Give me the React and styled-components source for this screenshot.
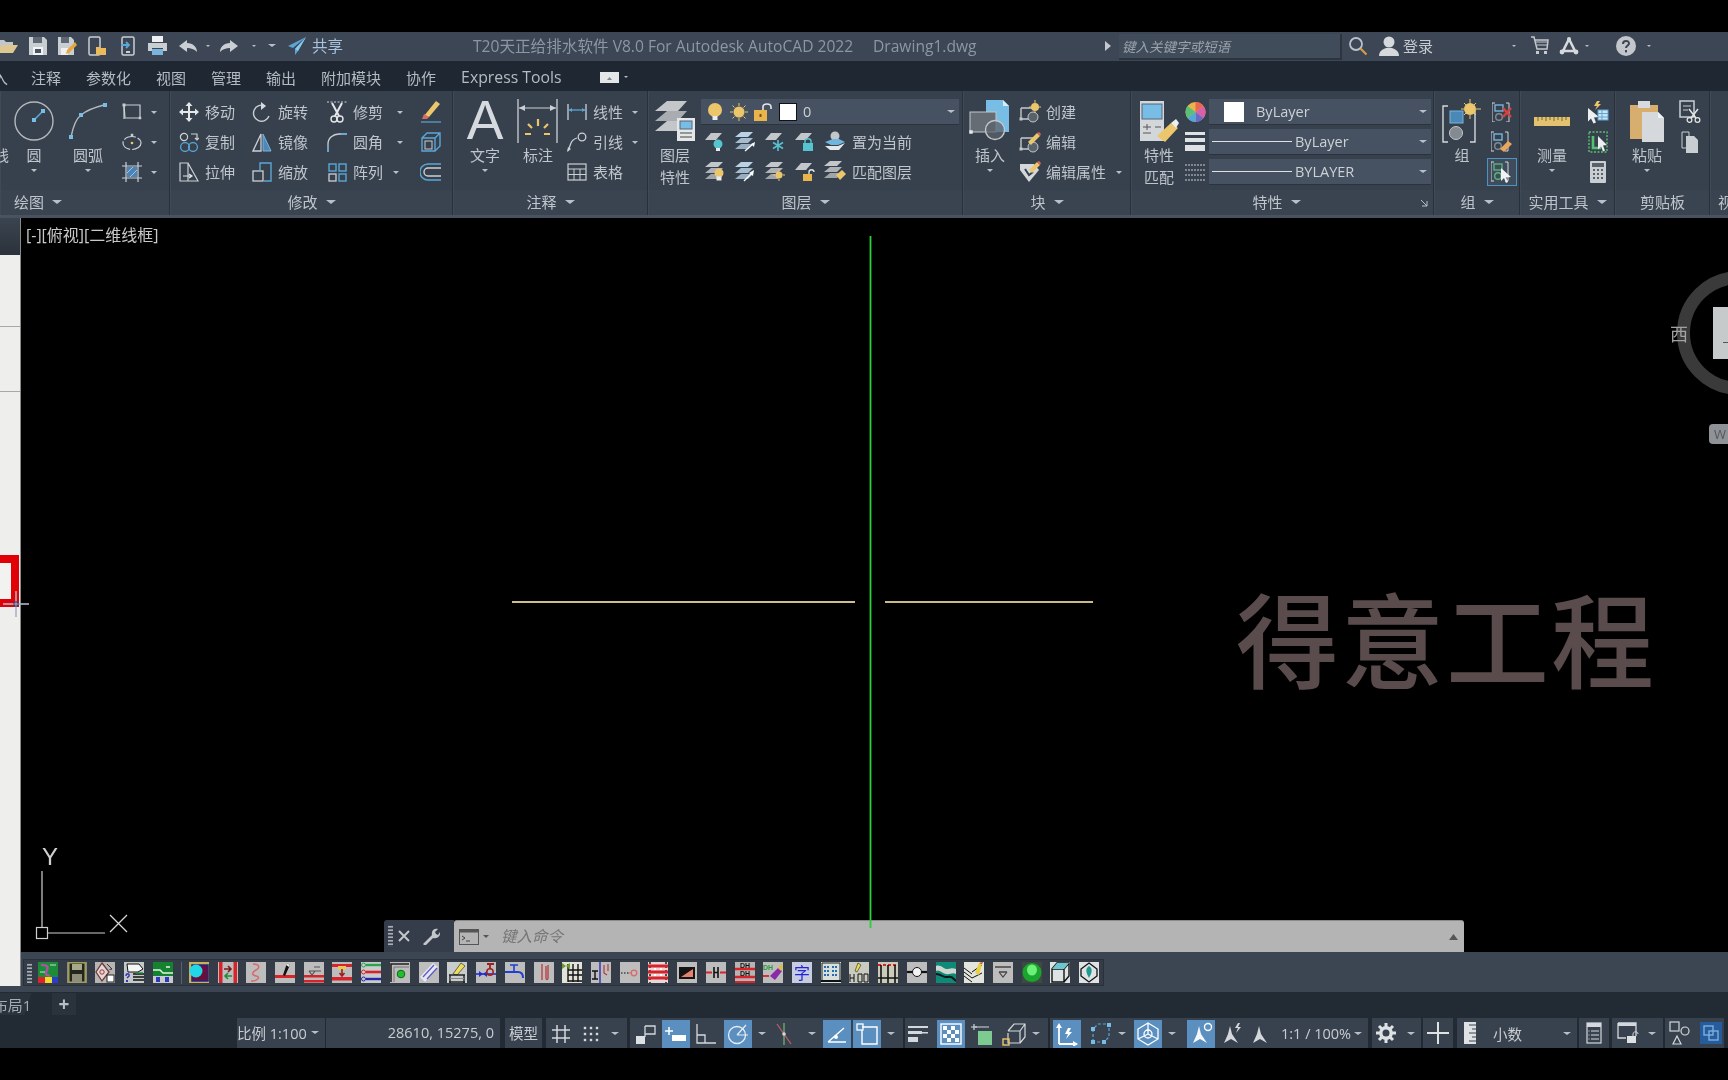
import styled, { createGlobalStyle } from "styled-components";

const FONT = `"Open Sans", "Noto Sans CJK SC", sans-serif`;
const L = "#ccd0d4";
const B = "#5ba6d6";
const Y = "#ecc66a";

const Global = createGlobalStyle`
  html, body { margin: 0; padding: 0; background: #000; }
  * { box-sizing: border-box; }
`;

const Frame = styled.div`
  width: 1728px;
  height: 1080px;
  overflow: hidden;
  background: #000;
  display: flex;
  flex-direction: column;
  font-family: ${FONT};
  filter: blur(0.55px);
`;

const TopGap = styled.div`
  height: 32px;
  flex-shrink: 0;
`;

const TitleBar = styled.div`
  height: 29px;
  flex-shrink: 0;
  background: #3c4654;
  display: flex;
  align-items: center;
  padding-bottom: 2px;
  color: #8d97a4;
  font-size: 15.6px;
  white-space: nowrap;
`;

const Slot = styled.span`
  display: flex;
  align-items: center;
  flex-shrink: 0;
  margin-left: ${p => p.$ml || 0}px;
`;

const ShareText = styled.span`
  margin-left: 6px;
  color: #a9c3dc;
  font-size: 15.5px;
`;

const AppTitle = styled.span`
  margin-left: ${p => p.$ml}px;
  width: ${p => p.$w}px;
  flex-shrink: 0;
`;

const SearchBox = styled.div`
  width: 223px;
  height: 26px;
  margin-left: 8px;
  margin-top: 2px;
  background: #414c5a;
  border-right: 2px solid #2c343f;
  border-bottom: 2px solid #2c343f;
  display: flex;
  align-items: center;
  padding-left: 3px;
  font-size: 13.5px;
  font-style: italic;
  color: #98a2ad;
`;

const LoginText = styled.span`
  margin-left: 3px;
  color: #c6cbd1;
  font-size: 15px;
  width: 92px;
`;

const MenuBar = styled.div`
  height: 30px;
  flex-shrink: 0;
  background: #1f2733;
  display: flex;
  align-items: center;
  gap: 25px;
  padding: 2px 0 0 31px;
  position: relative;
  color: #b4bbc3;
  font-size: 15px;
  white-space: nowrap;
`;

const ClippedTab = styled.span`
  position: absolute;
  left: -7px;
`;

const LatinTab = styled.span`
  font-size: 15.8px;
`;

const Ribbon = styled.div`
  height: 124px;
  flex-shrink: 0;
  background: #37414d;
  display: flex;
  color: #bfc5cc;
  font-size: 15px;
  white-space: nowrap;
`;

const Panel = styled.div`
  width: ${p => p.$w}px;
  flex-shrink: 0;
  display: flex;
  flex-direction: column;
  border-right: 1px solid #283039;
  border-left: 1px solid #404a57;
`;

const PanelBody = styled.div`
  height: 99px;
  padding-top: 6px;
  display: flex;
`;

const PanelFoot = styled.div`
  height: 25px;
  display: flex;
  align-items: center;
  justify-content: ${p => (p.$start ? "flex-start" : "center")};
  gap: 8px;
  padding-right: ${p => p.$pr || 0}px;
  padding-left: ${p => p.$pl || 0}px;
  padding-bottom: 2px;
  position: relative;
  background: #3a4451;
`;

const CornerMark = styled.svg`
  position: absolute;
  right: 5px;
  top: 9px;
`;

const Caret = styled.i`
  display: block;
  flex-shrink: 0;
  width: 0;
  height: 0;
  border-left: ${p => p.$s || 3.5}px solid transparent;
  border-right: ${p => p.$s || 3.5}px solid transparent;
  border-top: ${p => (p.$s || 3.5) * 0.9}px solid ${p => p.$c || "#b9bfc6"};
  margin-left: ${p => p.$ml || 0}px;
  margin-right: ${p => p.$mr || 0}px;
`;

const Large = styled.div`
  width: ${p => p.$w}px;
  margin-left: ${p => p.$ml || 0}px;
  flex-shrink: 0;
  display: flex;
  flex-direction: column;
  align-items: ${p => (p.$end ? "flex-end" : "center")};
`;

const LargeIcon = styled.div`
  height: 47px;
  display: flex;
  align-items: center;
  justify-content: center;
`;

const LargeLabel = styled.div`
  line-height: 22px;
`;

const LargeCaret = styled(Caret)`
  margin-top: 3px;
`;

const BigA = styled.div`
  font-family: "Liberation Sans", sans-serif;
  font-size: 55px;
  line-height: 47px;
  color: #d6dadf;
`;

const Col = styled.div`
  width: ${p => p.$w}px;
  margin-left: ${p => p.$ml || 0}px;
  flex-shrink: 0;
  display: flex;
  flex-direction: column;
`;

const Row = styled.div`
  height: 30px;
  display: flex;
  align-items: center;
  justify-content: ${p => (p.$center ? "center" : "flex-start")};
`;

const ToolSlot = styled.span`
  width: ${p => p.$w}px;
  display: flex;
  justify-content: center;
  flex-shrink: 0;
`;

const ToolText = styled.span`
  margin-left: ${p => p.$ml ?? 6}px;
  padding-bottom: 2px;
`;

const Boxed = styled.div`
  width: 30px;
  height: 28px;
  border: 1.5px solid #4f93c0;
  background: #3f4c5b;
  display: flex;
  align-items: center;
  justify-content: center;
`;

const Combo = styled.div`
  width: ${p => p.$w}px;
  height: 26px;
  background: #465261;
  border-bottom: 1px solid #2b333d;
  display: flex;
  align-items: center;
  padding: 0 ${p => p.$pr || 4}px 0 ${p => p.$pl || 6}px;
  color: #ccd1d6;
  font-size: 14.5px;
`;

const ComboValue = styled.span`
  flex: 1;
  margin-left: ${p => p.$ml || 0}px;
`;

const Swatch = styled.span`
  width: ${p => p.$w}px;
  height: ${p => p.$h}px;
  background: #fff;
  border: ${p => (p.$dark ? "1.5px solid #111" : "none")};
  margin-left: ${p => p.$ml || 0}px;
  flex-shrink: 0;
`;

const LineSample = styled.span`
  width: 80px;
  height: 1.5px;
  background: #dfe2e5;
  flex-shrink: 0;
`;

const RibbonEdge = styled.div`
  height: 3px;
  flex-shrink: 0;
  background: #49535f;
`;

const Main = styled.div`
  height: 774px;
  flex-shrink: 0;
  display: flex;
  background: #3c4652;
`;

const Palette = styled.div`
  width: 21px;
  flex-shrink: 0;
  height: 768px;
  display: flex;
  flex-direction: column;
  border-right: 1.5px solid #8a8a8a;
  background: #eeeeec;
  position: relative;
  z-index: 2;
`;

const PaletteHead = styled.div`
  height: 37px;
  background: linear-gradient(#3a4450, #2b323b);
`;

const PaletteRow = styled.div`
  height: ${p => p.$h}px;
  border-bottom: ${p => (p.$line ? "1px solid #a8a8a8" : "none")};
`;

const RedMark = styled.div`
  width: 19px;
  height: 52px;
  border: 8px solid #e00006;
  border-left: none;
  background: #f2f2f0;
`;

const PickCursor = styled.svg`
  position: absolute;
  left: 3px;
  top: 373px;
`;

const Work = styled.div`
  flex: 1;
  display: flex;
  flex-direction: column;
  min-width: 0;
`;

const Canvas = styled.div`
  height: 734px;
  background: #000;
  position: relative;
  overflow: hidden;
`;

const ViewLabel = styled.div`
  position: absolute;
  left: 5px;
  top: 4px;
  font-size: 16px;
  color: #c9c9c9;
  white-space: nowrap;
`;

const Drawing = styled.svg`
  position: absolute;
  left: 0;
  top: 0;
`;

const Watermark = styled.div`
  position: absolute;
  left: 1215px;
  top: 354px;
  font-family: "Noto Sans CJK SC", sans-serif;
  font-size: 103px;
  font-weight: 500;
  line-height: 130px;
  letter-spacing: 2px;
  color: #5a4c4c;
  white-space: nowrap;
`;

const CompassWest = styled.div`
  position: absolute;
  left: 1649px;
  top: 103px;
  font-size: 18px;
  line-height: 26px;
  color: #a2a2a2;
`;

const CubeFace = styled.div`
  position: absolute;
  left: 1692px;
  top: 89px;
  width: 40px;
  height: 52px;
  background: #c6caca;
  display: flex;
  align-items: flex-end;
  padding: 0 0 16px 10px;
  &::after {
    content: "";
    width: 6px;
    height: 1px;
    background: #555;
  }
`;

const WcsTag = styled.div`
  position: absolute;
  left: 1688px;
  top: 206px;
  width: 44px;
  height: 20px;
  border-radius: 4px;
  background: #8f9296;
  color: #54575b;
  font-size: 13px;
  line-height: 20px;
  padding-left: 5px;
`;

const CommandLine = styled.div`
  position: absolute;
  left: 363px;
  bottom: 0;
  width: 1080px;
  height: 32px;
  display: flex;
`;

const CommandHead = styled.div`
  width: 70px;
  flex-shrink: 0;
  background: #343d49;
  border-radius: 3px 0 0 0;
  display: flex;
  align-items: center;
  gap: 5px;
  padding-left: 4px;
`;

const Grip = styled.span`
  width: 5px;
  height: ${p => p.$h}px;
  flex-shrink: 0;
  background-image: radial-gradient(circle, #a9adb3 1.1px, transparent 1.3px);
  background-size: 2.5px 3.5px;
`;

const CommandInput = styled.div`
  flex: 1;
  background: #b4b4b4;
  border-top: 1px solid #8b8b8b;
  border-radius: 3px 3px 0 0;
  display: flex;
  align-items: center;
  padding: 0 6px 0 5px;
`;

const CommandHint = styled.span`
  flex: 1;
  margin-left: 12px;
  padding-bottom: 3px;
  color: #767676;
  font-style: italic;
  font-size: 15.5px;
`;

const ToolBand = styled.div`
  height: 40px;
  padding: 7px 0 0 2px;
`;

const ToolStrip = styled.div`
  width: 1081px;
  height: 27px;
  background: #333c47;
  border: 1px solid #2a313a;
  display: flex;
  align-items: center;
  padding-left: 3px;
`;

const MiniIcons = styled.div`
  display: flex;
  gap: 8.72px;
  margin-left: ${p => p.$ml}px;
`;

const StripSep = styled.span`
  width: 1px;
  height: 22px;
  background: #59626e;
  margin-left: 8px;
`;

const Lower = styled.div`
  height: 56px;
  flex-shrink: 0;
  background: #222a33;
`;

const LayoutTabs = styled.div`
  height: 26px;
  display: flex;
  align-items: center;
  padding-bottom: 3px;
  color: #a5abb3;
  font-size: 15px;
`;

const LayoutTab = styled.div`
  width: 42px;
  height: 22px;
  margin-left: -14px;
  padding-left: 7px;
  background: #2a323c;
  transform: skewX(-18deg);
  display: flex;
  align-items: center;
  white-space: nowrap;
  & > span { transform: skewX(18deg); }
`;

const AddTab = styled.div`
  width: 24px;
  height: 22px;
  margin-left: 24px;
  background: #2a323c;
  display: flex;
  align-items: center;
  justify-content: center;
  font-size: 19px;
  font-weight: 700;
  color: #b9bec4;
`;

const StatusBar = styled.div`
  height: 30px;
  padding-left: 237px;
  display: flex;
  color: #c8ccd1;
  font-size: 14.5px;
  white-space: nowrap;
`;

const StatusPill = styled.div`
  width: ${p => p.$w}px;
  margin-left: ${p => p.$ml ?? 2}px;
  flex-shrink: 0;
  background: #38424e;
  display: flex;
  align-items: center;
  padding-left: ${p => p.$pl || 0}px;
  padding-bottom: ${p => (p.$text ? 2 : 0)}px;
`;

const StatusValue = styled.span`
  flex: 1;
  text-align: ${p => (p.$right ? "right" : "left")};
  padding-right: ${p => (p.$right ? 6 : 0)}px;
  padding-left: ${p => p.$pl || 0}px;
`;

const StatusBtn = styled.div`
  width: ${p => p.$w || 28}px;
  height: 28px;
  margin-top: 2px;
  margin-left: ${p => p.$ml || 0}px;
  flex-shrink: 0;
  align-self: flex-start;
  background: ${p => (p.$on ? "#5b8fbf" : "transparent")};
  display: flex;
  align-items: center;
  justify-content: center;
`;

const Foot = styled.div`
  flex: 1;
  background: #000;
`;

const Ic = ({ w = 20, h = 20, children }) => (
  <svg width={w} height={h} viewBox={`0 0 ${w} ${h}`} style={{ display: "block", flexShrink: 0 }} fill="none">
    {children}
  </svg>
);

const sq = (x, y, s = 4, c = "#77bde6") => <rect x={x - s / 2} y={y - s / 2} width={s} height={s} fill={c} />;

// quick access
const FolderIcon = () => (
  <Ic w={18} h={18}>
    <path d="M-4 3h8l2 2h7v3H4l-6 8" fill="#c3c7cb" />
    <path d="M-4 16l6-8h16l-5 8z" fill="#dfc792" />
  </Ic>
);
const SaveIcon = () => (
  <Ic>
    <path d="M1 1h15l3 3v15H1z" fill="#c9ced3" />
    <rect x="5" y="1" width="9" height="6" fill="#5f6874" />
    <rect x="5" y="11" width="10" height="8" fill="#f2f3f4" />
    <rect x="7" y="13" width="6" height="4" fill="#4b5460" />
  </Ic>
);
const SaveAsIcon = () => (
  <Ic>
    <path d="M1 1h13l3 3v15H1z" fill="#c9ced3" />
    <rect x="4" y="1" width="8" height="6" fill="#5f6874" />
    <rect x="4" y="12" width="7" height="7" fill="#eef0f1" />
    <path d="M9 18l1-4 8-8 2 3-8 8z" fill="#e9a63f" />
  </Ic>
);
const PhoneFolderIcon = () => (
  <Ic w={18} h={20}>
    <rect x="1" y="1" width="11" height="18" rx="1.5" stroke="#c9ced3" strokeWidth="1.5" />
    <path d="M8 11h4l1 1h5v7H8z" fill="#e9bb5c" />
  </Ic>
);
const PhoneArrowIcon = () => (
  <Ic w={16} h={20}>
    <rect x="2" y="1" width="12" height="18" rx="1.5" stroke="#c9ced3" strokeWidth="1.5" />
    <path d="M1 9h7M6 6l3 3-3 3" stroke={B} strokeWidth="1.8" />
    <rect x="6" y="15" width="4" height="2" fill="#c9ced3" />
  </Ic>
);
const PrintIcon = () => (
  <Ic w={21} h={21}>
    <rect x="5" y="1" width="11" height="6" fill="#eef0f1" />
    <path d="M1 8h19v8h-4v-3H5v3H1z" fill="#c9ced3" />
    <rect x="5" y="14" width="11" height="6" fill="#7ab4dc" />
  </Ic>
);
const UndoIcon = ({ flip }) => (
  <Ic w={20} h={14}>
    <path d={flip ? "M11 1l8 6-8 6V9C7 9 4 10 1 13c0-5 4-9 10-9z" : "M9 1L1 7l8 6V9c4 0 7 1 10 4 0-5-4-9-10-9z"} fill="#c9ced3" />
  </Ic>
);
const SendIcon = () => (
  <Ic w={18} h={18}>
    <path d="M18 0L0 9l5 2zM18 0L7 12v6l3-4z" fill={B} />
    <path d="M18 0L10 14l-3-2z" fill="#8cc8ee" />
  </Ic>
);
const LensIcon = () => (
  <Ic>
    <circle cx="8" cy="8" r="6" stroke="#b9c2cc" strokeWidth="1.8" />
    <path d="M12.5 12.5l6 6" stroke="#d69c45" strokeWidth="2.2" />
  </Ic>
);
const UserIcon = () => (
  <Ic w={22} h={20}>
    <circle cx="11" cy="6" r="5.5" fill="#d5d9dd" />
    <path d="M1 20c0-5 4-7 7-8h6c3 1 7 3 7 8z" fill="#d5d9dd" />
  </Ic>
);
const CartIcon = () => (
  <Ic w={18} h={20}>
    <path d="M0 1h3l3 12h10l1-9H4" stroke="#c5c9ce" strokeWidth="1.5" />
    <path d="M5 6h11M6 9h10" stroke="#c5c9ce" strokeWidth="1" />
    <rect x="5" y="15" width="3" height="3" fill="#c5c9ce" />
    <rect x="13" y="15" width="3" height="3" fill="#c5c9ce" />
  </Ic>
);
const A360Icon = () => (
  <Ic>
    <path d="M10 3L3 17M10 3l7 14M4 15h12" stroke="#d5d9dd" strokeWidth="2.6" />
    <circle cx="10" cy="3" r="2" fill="#d5d9dd" />
    <circle cx="3" cy="16" r="2.4" fill="#d5d9dd" />
    <circle cx="17" cy="16" r="2.4" fill="#d5d9dd" />
  </Ic>
);
const HelpIcon = () => (
  <Ic>
    <circle cx="10" cy="10" r="10" fill="#c3c7cb" />
    <path d="M7 8c0-4 6-4 6-.5 0 2-3 2-3 4.5" stroke="#3c4654" strokeWidth="2" />
    <rect x="9" y="14" width="2" height="2.4" fill="#3c4654" />
  </Ic>
);
const LayoutThumb = () => (
  <Ic w={19} h={11}>
    <rect width="19" height="11" fill="#e4e6e8" />
    <path d="M7 8l2.5-3L12 8z" fill="#7c8590" />
  </Ic>
);

// draw panel
const CircleTool = () => (
  <Ic w={40} h={40}>
    <circle cx="20" cy="20" r="19" stroke="#b4b8bc" strokeWidth="1.4" />
    <path d="M20 19L29 10" stroke={B} strokeWidth="1.6" />
    {sq(20, 19)}
    {sq(29, 10)}
  </Ic>
);
const ArcTool = () => (
  <Ic w={40} h={38}>
    <path d="M3 35C5 25 9 16 13 13 20 7 28 5 36 3" stroke="#b4b8bc" strokeWidth="1.4" />
    {sq(3, 35)}
    {sq(13, 13)}
    {sq(37, 3)}
  </Ic>
);
const RectTool = () => (
  <Ic>
    <path d="M2 3h16v13H3z" stroke={L} strokeWidth="1.2" />
    <path d="M2 3v14" stroke={L} strokeWidth="1.2" />
    {sq(2, 3, 3, "#c8ccd0")}
    {sq(18, 16, 2.5, "#c8ccd0")}
  </Ic>
);
const EllipseTool = () => (
  <Ic>
    <ellipse cx="10" cy="11" rx="9" ry="6.5" stroke={L} strokeDasharray="12 2" strokeWidth="1.2" />
    <circle cx="10" cy="11" r="1.3" fill={Y} />
    {sq(10, 3, 2.5, "#c8ccd0")}
  </Ic>
);
const HatchTool = () => (
  <Ic>
    <path d="M4 0v20M16 0v20M0 4h20M0 16h20" stroke={L} strokeWidth="1.2" />
    <rect x="5" y="5" width="10" height="10" fill="#4e83b5" />
    <path d="M5 11l6-6M8 15l7-7" stroke="#9fc4e3" />
  </Ic>
);

// modify panel
const MoveIcon = () => (
  <Ic>
    <path d="M10 1v18M1 10h18" stroke="#e4e6e8" strokeWidth="2" />
    <path d="M10 0l3.5 4h-7zM10 20l3.5-4h-7zM0 10l4-3.5v7zM20 10l-4-3.5v7z" fill="#e4e6e8" />
  </Ic>
);
const RotateIcon = () => (
  <Ic>
    <path d="M13 4A8 8 0 1 0 17 14" stroke={L} strokeWidth="1.4" />
    <path d="M9 0l5 4-5 4z" fill="#d8dbde" />
  </Ic>
);
const TrimIcon = () => (
  <Ic w={20} h={24}>
    <path d="M0 2h20" stroke={L} strokeDasharray="2 1.5" />
    <path d="M5 3l7 13M15 3L8 16" stroke="#e4e6e8" strokeWidth="2" />
    <circle cx="7" cy="19" r="3" stroke="#e4e6e8" strokeWidth="1.4" />
    <circle cx="13" cy="19" r="3" stroke="#e4e6e8" strokeWidth="1.4" />
  </Ic>
);
const EraseIcon = () => (
  <Ic w={22} h={24}>
    <path d="M16 1l4 3L9 17l-5-1z" fill={Y} />
    <path d="M4 14l5 3-2 2H2z" fill="#d86a63" />
    <path d="M1 22h20" stroke={B} strokeWidth="1.2" />
  </Ic>
);
const CopyIcon = () => (
  <Ic>
    <circle cx="5" cy="5" r="3.6" stroke={L} strokeWidth="1.2" />
    <path d="M12 2h6v6M16 6l2 2 2-2" stroke={L} strokeWidth="1.2" />
    <circle cx="6" cy="15" r="4.4" stroke={B} strokeWidth="1.3" />
    <circle cx="14" cy="15" r="4.4" stroke={B} strokeWidth="1.3" />
  </Ic>
);
const MirrorIcon = () => (
  <Ic>
    <path d="M9 2L1 19h8z" stroke={L} strokeWidth="1.3" />
    <path d="M11 2l8 17h-8z" fill="#4f87b6" stroke="#7ab4dc" />
  </Ic>
);
const FilletIcon = () => (
  <Ic>
    <path d="M1 20V12C1 6 6 2 12 2h8" stroke={L} strokeWidth="1.3" />
    <path d="M1 20v-6M14 2h6" stroke={B} strokeWidth="1.3" />
  </Ic>
);
const SolidIcon = () => (
  <Ic w={22} h={22}>
    <path d="M2 7h13v13H2zM2 7l5-5h13v13l-5 5M15 7l5-5" stroke={B} strokeWidth="1.4" />
    <rect x="5" y="10" width="7" height="8" stroke="#c8ccd0" />
  </Ic>
);
const StretchIcon = () => (
  <Ic>
    <path d="M1 1h8v18H1zM9 1l10 18H9" stroke={L} strokeWidth="1.2" />
    <path d="M4 14h8M10 12l3 2-3 2" stroke="#e4e6e8" strokeWidth="1.2" />
  </Ic>
);
const ScaleIcon = () => (
  <Ic>
    <path d="M8 8V1h11v18h-7" stroke={B} strokeWidth="1.4" />
    <rect x="1" y="9" width="10" height="10" stroke={L} strokeWidth="1.3" />
  </Ic>
);
const ArrayIcon = () => (
  <Ic>
    <rect x="2" y="2" width="7" height="7" stroke={B} strokeWidth="1.4" />
    <rect x="12" y="2" width="7" height="7" stroke={B} strokeWidth="1.4" />
    <rect x="2" y="12" width="7" height="7" stroke={L} strokeWidth="1.3" />
    <rect x="12" y="12" width="7" height="7" stroke={B} strokeWidth="1.4" />
  </Ic>
);
const OffsetIcon = () => (
  <Ic w={22} h={20}>
    <path d="M21 2H8a8 8 0 0 0 0 16h13" stroke={B} strokeWidth="1.4" />
    <path d="M21 6H8a4 4 0 0 0 0 8h13" stroke={L} strokeWidth="1.4" />
  </Ic>
);

// annotate panel
const DimIcon = () => (
  <Ic w={42} h={44}>
    <path d="M1 0v44M40 0v44" stroke={L} strokeWidth="1.3" />
    <path d="M2 9h37" stroke={L} strokeWidth="1.2" />
    <path d="M2 9l6-3v6zM39 9l-6-3v6z" fill={L} />
    <path d="M21 20v7M11 25l4 4M31 25l-4 4M8 35h6M27 35h6" stroke={Y} strokeWidth="2.2" />
  </Ic>
);
const LinearIcon = () => (
  <Ic>
    <path d="M1 2v16M19 2v16" stroke={L} strokeWidth="1.3" />
    <path d="M2 8h16" stroke={B} strokeWidth="1.3" />
    <path d="M2 8l3-2v4zM18 8l-3-2v4z" fill={B} />
  </Ic>
);
const LeaderIcon = () => (
  <Ic>
    <path d="M1 19l3-8c1-3 3-4 6-5" stroke={L} strokeWidth="1.3" />
    <path d="M0 20l1-5 3 2z" fill={L} />
    <circle cx="15" cy="5" r="3.8" stroke={L} strokeWidth="1.3" />
  </Ic>
);
const TableIcon = () => (
  <Ic>
    <rect x="1" y="2" width="18" height="16" stroke={L} strokeWidth="1.2" />
    <path d="M1 7h18M1 12.5h18M7 7v11M13 7v11" stroke={L} />
  </Ic>
);

// layer panel
const layersStack = (c = "#c4c7ca") => (
  <>
    <path d="M6 0h12l-5 5H0z" fill={c} />
    <path d="M6 6h12l-5 5H0z" fill={c} opacity=".85" />
    <path d="M6 12h12l-5 5H0z" fill={c} opacity=".75" />
  </>
);
const LayerProps = () => (
  <Ic w={44} h={42}>
    <path d="M14 1h20l-9 10H2z" fill="#c4c7ca" />
    <path d="M14 11h20l-9 10H2z" fill="#a9adb1" />
    <path d="M14 21h20l-9 10H2z" fill="#c4c7ca" />
    <rect x="24" y="18" width="18" height="23" fill="#e4e6e8" />
    <rect x="27" y="21" width="12" height="8" fill="#77bde6" stroke="#567" />
    <path d="M27 33h12M27 37h12" stroke="#444" />
  </Ic>
);
const Bulb = ({ x = 8, y = 6, r = 6 }) => (
  <>
    <circle cx={x} cy={y} r={r} fill={Y} />
    <rect x={x - 2.5} y={y + r - 1} width="5" height="4" fill="#e9ecef" />
  </>
);
const BulbIcon = () => (
  <Ic w={16} h={18}>
    <Bulb y={7} r={7} />
  </Ic>
);
const SunIcon = () => (
  <Ic w={18} h={18}>
    <circle cx="9" cy="9" r="5.5" fill={Y} />
    <path d="M9 0v3M9 15v3M0 9h3M15 9h3M2.5 2.5l2 2M13.5 13.5l2 2M2.5 15.5l2-2M13.5 4.5l2-2" stroke={Y} />
  </Ic>
);
const LockOpen = ({ c = "#e9b44c" }) => (
  <Ic w={19} h={18}>
    <rect x="0" y="7" width="13" height="11" fill={c} />
    <path d="M9 7V4c0-4 8-4 8 0v2" stroke="#e6e8ea" strokeWidth="1.6" />
    <rect x="5.5" y="11" width="2" height="3" fill="#7a4b14" />
  </Ic>
);
const sheet = <path d="M6 1h11l-6 7H0z" fill="#c4c7ca" />;
const LayerOff = () => (
  <Ic>
    {sheet}
    <circle cx="13" cy="12" r="4.5" fill="#56c3cf" />
    <rect x="11" y="16" width="4" height="3" fill="#e9ecef" />
  </Ic>
);
const LayerIso = () => (
  <Ic>
    {layersStack("#b9d2e6")}
    <path d="M10 19l8-7" stroke="#fff" strokeWidth="1.3" />
    <path d="M20 10l-1 5-3-3z" fill="#fff" />
  </Ic>
);
const LayerFreeze = () => (
  <Ic>
    {sheet}
    <path d="M13 8v11M8 10.5l10 6M8 16.5l10-6" stroke="#56c3cf" strokeWidth="1.6" />
  </Ic>
);
const LayerLock = () => (
  <Ic>
    {sheet}
    <rect x="8" y="11" width="10" height="8" fill="#56c3cf" />
    <path d="M10 11V9c0-3 6-3 6 0v2" stroke="#56c3cf" strokeWidth="1.4" />
  </Ic>
);
const LayerCurrent = () => (
  <Ic w={22} h={22}>
    <circle cx="11" cy="5" r="4.5" fill="#c4c7ca" />
    <path d="M1 11l8-3h6l6 3-7 3H7z" fill="#6fb5de" />
    <path d="M1 15h13l7-3-6 7H6z" fill="#e4e6e8" />
  </Ic>
);
const LayerOn = () => (
  <Ic>
    {layersStack()}
    <Bulb x={14} y={11} r={4.5} />
  </Ic>
);
const LayerPrev = () => (
  <Ic>
    {layersStack("#b9d2e6")}
    <path d="M9 19l8-8" stroke="#fff" strokeWidth="1.3" />
    <path d="M19 8l-1 6-4-3z" fill="#fff" />
  </Ic>
);
const LayerThaw = () => (
  <Ic>
    {layersStack()}
    <circle cx="14" cy="13" r="3.5" fill={Y} />
    <path d="M14 7v2M14 17v2M8 13h2M18 13h2" stroke={Y} />
  </Ic>
);
const LayerUnlock = () => (
  <Ic>
    {sheet}
    <rect x="8" y="12" width="9" height="7" fill="#e9b44c" />
    <path d="M14 12v-2c0-3 5-3 5 0" stroke="#e6e8ea" strokeWidth="1.3" />
  </Ic>
);
const LayerMatch = () => (
  <Ic w={22} h={22}>
    {layersStack()}
    <path d="M12 14l6-5 4 4-6 6z" fill={Y} />
  </Ic>
);

// block panel
const InsertIcon = () => (
  <Ic w={42} h={42}>
    <path d="M17 0h17l6 6v26H17z" fill="#77bde6" />
    <path d="M34 0l6 6h-6z" fill="#d7ecf9" />
    <rect x="1" y="12" width="26" height="20" fill="#646c74" stroke="#c4c7ca" />
    {sq(2, 32, 3.5, "#e4e6e8")}
    <circle cx="26" cy="30" r="9.5" fill="#5b636c" fillOpacity=".75" stroke="#c4c7ca" strokeWidth="1.4" />
  </Ic>
);
const BlockBase = () => (
  <>
    <path d="M3 8h13M3 8v11h10" stroke="#c4c7ca" strokeWidth="1.4" />
    {sq(3, 19, 3, "#c4c7ca")}
    <circle cx="15" cy="17" r="5" fill="#59616b" stroke="#c4c7ca" />
  </>
);
const BlockNew = () => (
  <Ic w={24} h={24}>
    <BlockBase />
    <circle cx="17" cy="7" r="4" fill={Y} />
    <path d="M17 0v3M17 11v2M11 7h2M21 7h2" stroke={Y} />
  </Ic>
);
const BlockEdit = () => (
  <Ic w={24} h={24}>
    <BlockBase />
    <path d="M10 12l9-9 3 3-9 9z" fill={Y} />
    <path d="M19 3l3 3 1-2-2-2z" fill="#d9645c" />
  </Ic>
);
const AttrEdit = () => (
  <Ic w={24} h={24}>
    <path d="M2 4h14l5 6-10 12L2 10z" fill="#d5d8db" />
    <path d="M7 9l4 6 4-3" stroke="#37414d" strokeWidth="2" />
    <path d="M11 10l8-8 3 3-8 8z" fill={Y} />
    <path d="M19 2l3 3 1-2-2-2z" fill="#d9645c" />
  </Ic>
);

// properties panel
const MatchProps = () => (
  <Ic w={40} h={42}>
    <rect x="1" y="1" width="24" height="40" fill="#d4d7da" />
    <rect x="3" y="4" width="20" height="15" fill="#77bde6" stroke="#567" />
    <path d="M4 27h8M8 24v6M4 33h8M16 27h6" stroke="#555" />
    <path d="M18 36l14-13 7 5-13 14z" fill={Y} />
    <path d="M32 23l5-4 3 4-3 5z" fill="#eceeef" />
  </Ic>
);
const ColorWheel = () => (
  <Ic w={21} h={22}>
    <circle cx="10.5" cy="11" r="10" fill="#e9b44c" />
    <path d="M10.5 11V1a10 10 0 0 1 8 4z" fill="#e9694c" />
    <path d="M10.5 11l8-6a10 10 0 0 1 0 12z" fill="#d85fa8" />
    <path d="M10.5 11l8 6a10 10 0 0 1-8 4z" fill="#6a68c8" />
    <path d="M10.5 11v10a10 10 0 0 1-8-4z" fill="#4fa8dc" />
    <path d="M10.5 11l-8 6a10 10 0 0 1 0-12z" fill="#59c07a" />
  </Ic>
);
const WeightIcon = () => (
  <Ic w={20} h={22}>
    <rect y="1" width="20" height="3" fill="#dfe2e5" />
    <rect y="7" width="20" height="4" fill="#dfe2e5" />
    <rect y="14" width="20" height="6" fill="#dfe2e5" />
  </Ic>
);
const TypeIcon = () => (
  <Ic w={20} h={20}>
    <path d="M0 3h20M0 8h20M0 13h20M0 18h20" stroke="#c9ced3" strokeDasharray="2 1" strokeWidth="1.2" />
  </Ic>
);

// group panel
const GroupIcon = () => (
  <Ic w={40} h={44}>
    <path d="M6 7H1v36h5M29 12h4v31h-5" stroke="#d4d7da" strokeWidth="1.4" />
    <rect x="8" y="12" width="13" height="12" fill="#4a88b8" stroke="#7ab4dc" />
    <circle cx="14" cy="34" r="6.5" fill="#838a91" stroke="#c4c7ca" />
    <circle cx="28" cy="10" r="6" fill={Y} />
    <path d="M28 0v4M28 16v4M19 10h3M34 10h5M22 4l2 2M34 4l-2 2M22 16l2-2M34 16l-2-2" stroke={Y} />
  </Ic>
);
const miniGroup = (c1 = "#4a88b8", c2 = "#838a91") => (
  <>
    <path d="M3 1H0v19h3M14 1h3v19h-3" stroke="#d4d7da" />
    <rect x="3" y="3" width="8" height="6" fill="none" stroke={c1 === "#4a88b8" ? "#7ab4dc" : c1} strokeWidth="1.4" />
    <circle cx="7" cy="15" r="3.3" stroke={c2} strokeWidth="1.4" />
  </>
);
const GroupDel = () => (
  <Ic w={20} h={20}>
    {miniGroup()}
    <path d="M11 6l8 9M19 6l-8 9" stroke="#d8423e" strokeWidth="2.4" />
  </Ic>
);
const GroupEdit = () => (
  <Ic w={22} h={22}>
    {miniGroup()}
    <path d="M9 18l8-8 4 3-8 8z" fill="#e9a65c" />
  </Ic>
);
const GroupPick = () => (
  <Ic w={22} h={22}>
    {miniGroup("#5cb37a", "#5cb37a")}
    <path d="M10 7l10 9-5 .5 2 4.5-2 1-2-5-3 3z" fill="#f1f2f3" />
  </Ic>
);

// utilities / clipboard
const RulerIcon = () => (
  <Ic w={36} h={12}>
    <rect y="2" width="36" height="9" fill="#e2c26e" />
    <path d="M4 2v4M8 2v3M12 2v4M16 2v3M20 2v4M24 2v3M28 2v4M32 2v3" stroke="#7d6730" />
  </Ic>
);
const QuickSelect = () => (
  <Ic w={22} h={24}>
    <path d="M1 8l11 9-5 .5 2 5-2.5 1-2.5-5-3 3z" fill="#eceef0" />
    <path d="M10 1l-3 5h3l-2 4 6-6h-3l2-3z" fill={Y} />
    <rect x="11" y="10" width="10" height="10" fill="#cfe4f2" stroke="#5ba6d6" />
    <path d="M11 13.5h10M11 17h10M15 10v10" stroke="#5ba6d6" />
  </Ic>
);
const CountIcon = () => (
  <Ic w={20} h={24}>
    <rect x="1" y="2" width="18" height="20" stroke="#57c06f" strokeDasharray="2 1.5" strokeWidth="1.4" />
    <path d="M5 6v12h8" stroke="#57c06f" strokeWidth="2.6" />
    <path d="M10 6l9 9-4 .5 2 5-2 1-2-5-3 3z" fill="#eceef0" />
  </Ic>
);
const CalcIcon = () => (
  <Ic w={16} h={22}>
    <rect width="16" height="22" rx="1" fill="#c9ced3" />
    <rect x="2" y="2" width="12" height="4" fill="#59616b" />
    <path d="M3 9h2M7 9h2M11 9h2M3 13h2M7 13h2M11 13h2M3 17h2M7 17h2M11 17h2" stroke="#59616b" strokeWidth="2" />
  </Ic>
);
const PasteIcon = () => (
  <Ic w={34} h={42}>
    <rect y="5" width="28" height="34" fill="#d8ae6e" />
    <rect x="8" y="1" width="12" height="7" fill="#d8dbde" />
    <path d="M12 12h16l6 6v24H12z" fill="#d6d9dc" />
    <path d="M28 12l6 6h-6z" fill="#f1f2f3" />
  </Ic>
);
const CutIcon = () => (
  <Ic w={22} h={24}>
    <rect x="1" y="1" width="14" height="16" stroke="#c9ced3" strokeWidth="1.5" />
    <path d="M4 6h8M4 10h5" stroke="#c9ced3" />
    <path d="M10 9l7 9M19 9l-7 9" stroke="#e4e6e8" strokeWidth="1.5" />
    <circle cx="10.5" cy="20" r="2.4" stroke="#e4e6e8" strokeWidth="1.2" />
    <circle cx="18.5" cy="20" r="2.4" stroke="#e4e6e8" strokeWidth="1.2" />
  </Ic>
);
const ClipCopy = () => (
  <Ic w={18} h={22}>
    <path d="M1 1h7v16H1z" stroke="#c9ced3" />
    <path d="M5 5h8l4 4v13H5z" fill="#c9ced3" />
  </Ic>
);

// tianzheng toolbar, 20x21 little bitmaps
const Mini = ({ bg = "#bdbdbd", children }) => (
  <svg width="20" height="21" viewBox="0 0 20 21" style={{ display: "block", flexShrink: 0 }} fill="none">
    <rect width="20" height="21" fill={bg} />
    {children}
  </svg>
);
const R = "#d8232a";
const miniFirst = [
  <Mini bg="#1c8c3a"><path d="M3 3c5 0 8 1 6 5s-2 5 3 6" stroke="#b64fa8" strokeWidth="2.2" /><path d="M12 3h6M2 10h5" stroke="#bde6c4" /><rect y="15" width="7" height="6" fill="#e0202a" /><rect x="7" y="15" width="7" height="6" fill="#f2dc2a" /><rect x="14" y="15" width="6" height="6" fill="#2a3cd0" /></Mini>,
  <Mini bg="#8d8d7a"><rect x="2" y="1" width="16" height="19" fill="#22261c" stroke="#b0aa4c" /><rect x="5" y="2" width="10" height="6" fill="#a8a88c" /><rect x="5" y="12" width="10" height="8" fill="#8d8d7a" /></Mini>,
  <Mini bg="#b8b4b2"><path d="M7 1l7 9-7 9-6-9z" fill="#e2d8d6" stroke="#6c3b3b" strokeWidth="1.3" /><circle cx="7" cy="10" r="2.2" stroke="#a03333" /><path d="M12 2l5 5-2.5.5" stroke="#333" /><rect x="12" y="13" width="7" height="7" fill="#fff" stroke="#222" /></Mini>,
  <Mini bg="#c4c8c8"><path d="M3 2h12l4 5-5 3H4z" fill="#f5f5f5" stroke="#111" /><path d="M2 14c0-3 4-3 3 0l-2 2" stroke="#3333c0" strokeWidth="1.4" /><rect x="2" y="18" width="2" height="2" fill="#3333c0" /><path d="M9 12h11M9 15h11M9 18h11" stroke="#111" strokeWidth="1.5" /><path d="M12 11h7" stroke="#1c8c3a" strokeWidth="1.4" /></Mini>,
  <Mini bg="#15822f"><path d="M0 8h7l3 3h10M13 5h4" stroke="#e5f4e5" strokeWidth="1.4" /><rect y="14" width="20" height="7" fill="#c8cad0" /><rect x="3" y="15" width="4" height="5" fill="#2a3cb8" /><rect x="12" y="15" width="4" height="5" fill="#2a3cb8" /></Mini>,
];
const miniSecond = [
  <Mini bg="#c9b05c"><rect x="3" y="3" width="16" height="16" fill="#6a0f3a" stroke="#252580" strokeWidth="1.5" /><circle cx="7" cy="9" r="6.5" fill="#22d8e8" /></Mini>,
  <Mini><rect x="1" width="3.5" height="21" fill={R} /><rect x="15.5" width="3.5" height="21" fill={R} /><path d="M6 7h7M10 4l3 3-3 3" stroke="#7a1a1a" strokeWidth="1.6" /><path d="M14 14H7M10 11l-3 3 3 3" stroke="#1c8c3a" strokeWidth="1.6" /></Mini>,
  <Mini><path d="M7 2c7 0 7 4 3 6s-5 5 0 6 2 5-5 5" stroke="#d56a6a" strokeWidth="1.5" /></Mini>,
  <Mini><rect y="13" width="20" height="3" fill={R} /><path d="M12 1l3 2-5 11-2-1z" fill="#111" /><path d="M12 1l3 2-1 2-3-2z" fill="#e4e4e4" /></Mini>,
  <Mini><rect y="13" width="20" height="2.5" fill={R} /><rect y="18" width="20" height="2.5" fill={R} /><path d="M5 9h12M10 5h6M5 9l3 4 3-4" stroke="#555" strokeWidth="1.2" /></Mini>,
  <Mini><rect y="2" width="20" height="3" fill={R} /><rect y="15" width="20" height="3.5" fill={R} /><rect x="6" y="4" width="8" height="4" fill="#e4c860" /><path d="M10 7v6M7.5 11l2.5 3 2.5-3" stroke="#9a1f1f" strokeWidth="1.6" /></Mini>,
  <Mini bg="#c8cccc"><path d="M5 3h15" stroke="#2ca34a" strokeWidth="2.4" /><path d="M5 10h15" stroke={R} strokeWidth="2.6" /><path d="M5 17h15" stroke="#2626a8" strokeWidth="2.4" /><circle cx="2.5" cy="3" r="2" stroke="#2ca34a" /><circle cx="2.5" cy="10" r="2" stroke={R} /><circle cx="2.5" cy="17" r="2" stroke="#2626a8" /></Mini>,
  <Mini><path d="M1 20V2h18" stroke="#222" strokeWidth="1.6" /><path d="M4 20V5h15" stroke="#777" /><circle cx="11" cy="12" r="3.8" fill="#20c02c" stroke="#14651b" /></Mini>,
  <Mini><path d="M1 15L14 1l5 4L6 20z" fill="#e8e8f0" /><path d="M4 15L15 3M8 17L18 6" stroke="#5c5cc8" strokeWidth="1.3" /></Mini>,
  <Mini bg="#c8cccc"><path d="M14 1l4 3-8 9-4-1z" fill="#eedd55" stroke="#333" strokeWidth=".7" /><path d="M2 13h16M2 20h16M3 13v8M17 13v8" stroke="#222" strokeWidth="1.4" /><path d="M3 16.5h14" stroke="#888" /></Mini>,
  <Mini><path d="M0 12h20" stroke="#1f2fd0" strokeWidth="1.6" /><path d="M3 9l4 3-4 3zM11 9l-4 3 4 3z" fill="#1f2fd0" /><circle cx="14" cy="10" r="3.2" stroke="#a02020" strokeWidth="1.5" /><path d="M11 2h7M14 2v5" stroke="#a02020" strokeWidth="1.8" /></Mini>,
  <Mini><path d="M0 10h13c3 0 5 1 5 6" stroke="#1f3fd0" strokeWidth="2" /><path d="M5 3h8M9 3v7" stroke="#1f3fd0" strokeWidth="1.6" /></Mini>,
  <Mini><path d="M8 2v16M12 4v12c0 2 2 2 2 0V3" stroke="#b83a3a" strokeWidth="1.3" /></Mini>,
  <Mini bg="#e2e2d8"><path d="M6 2v18M11 2v18M16 2v18M6 8h14M6 13h14M6 19h14" stroke="#111" strokeWidth="1.4" /><path d="M0 1l4 3-4 3zM8 1L4 4l4 3" fill="#6a9a30" /></Mini>,
  <Mini><path d="M9 0v21" stroke="#2222b0" strokeWidth="1.3" /><path d="M1 9h6M4 9v8M1 17h6" stroke="#111" strokeWidth="1.4" /><path d="M13 3v8l3 2M17 2v7" stroke="#b83a3a" strokeWidth="1.2" /></Mini>,
  <Mini><path d="M1 11h8" stroke="#444" strokeDasharray="1.5 1.5" strokeWidth="1.5" /><circle cx="14" cy="11" r="2.8" stroke="#d86a6a" strokeWidth="1.3" /><path d="M9 11h2" stroke="#d86a6a" /></Mini>,
  <Mini bg="#e6d8d8"><path d="M2 0v21M18 0v21" stroke="#111" strokeWidth="1.4" strokeDasharray="2 2" /><path d="M0 4h20M0 10h20M0 16h20" stroke={R} strokeWidth="3" /><path d="M6 7h2M12 13h2M6 13h2M12 7h2" stroke="#fff" strokeWidth="2" /></Mini>,
  <Mini><rect x="2" y="5" width="16" height="12" fill="#141414" /><path d="M4 15L16 7v8z" fill="#e88070" /></Mini>,
  <Mini><path d="M0 10.5h6M14 10.5h6" stroke={R} strokeWidth="2" /><path d="M8 5v11M12 5v11M8 10.5h4" stroke="#111" strokeWidth="1.6" /></Mini>,
  <Mini bg="#b8b4b4"><path d="M0 7h20M0 15h20" stroke={R} strokeWidth="2.6" /><rect y="19" width="20" height="2" fill={R} /><text x="10" y="6" textAnchor="middle" fontSize="7" fontWeight="700" fill="#111" fontFamily="Liberation Sans">DH</text><text x="10" y="14" textAnchor="middle" fontSize="7" fontWeight="700" fill="#111" fontFamily="Liberation Sans">DH</text></Mini>,
  <Mini><text x="0" y="8" fontSize="7" fontWeight="700" fill="#2a9a3a" fontFamily="Liberation Sans">DH</text><path d="M0 14h6" stroke={R} strokeWidth="1.8" /><path d="M7 14l8-8 4 3-7 9z" fill="#8a2aa8" /><path d="M15 6l3-4 2 2-2 5z" fill="#d8c040" /></Mini>,
  <Mini bg="#c8cce0"><text x="10" y="17" textAnchor="middle" fontSize="16" fill="#2222d8" fontFamily="Noto Sans CJK SC">字</text></Mini>,
  <Mini bg="#d8e0dc"><path d="M1 1h18v18H1z" stroke="#222" /><path d="M3 5h5M3 9h5M3 13h5M11 5h6M11 9h6M11 13h6" stroke="#2a6ab0" strokeWidth="2" strokeDasharray="2 1" /><path d="M0 19h20" stroke="#111" strokeWidth="2" /></Mini>,
  <Mini bg="#c9cac0"><path d="M9 1l3 2-4 7-2-1z" fill="#ecdc50" stroke="#222" strokeWidth=".6" /><path d="M1 12v8M5 12v8M1 16h4M9 12h4v8H9zM15 12h4v8h-4z" stroke="#111" /></Mini>,
  <Mini bg="#c9cab8"><path d="M0 3h20" stroke={R} strokeWidth="2" strokeDasharray="3 2" /><path d="M3 3v18M10 3v18M17 3v18M0 16h20" stroke="#111" strokeWidth="1.6" /></Mini>,
  <Mini><path d="M0 10h20" stroke="#111" strokeWidth="2.2" /><circle cx="10" cy="10" r="4.5" fill="#f4f4f4" stroke="#111" /></Mini>,
  <Mini bg="#0f8a78"><path d="M0 4c5-2 8 4 12 3s5-1 8 0v5c-4-2-6 1-10 0S3 7 0 9z" fill="#cfd6d0" /><path d="M0 12c6 0 7 4 12 3s5 2 8 4" stroke="#06181a" strokeWidth="2" /></Mini>,
  <Mini bg="#e4e4de"><path d="M0 6l8 6M0 10l8 6M0 14l8 6M8 10l10-7M8 16l10-5" stroke="#111" /><path d="M11 11l4-10 3 1-3 11z" fill="#e8d040" /><path d="M15 1l3 1 1-2z" fill={R} /></Mini>,
  <Mini><path d="M2 5h16M6 10h8" stroke="#444" strokeWidth="1.6" /><path d="M6 10l4 5 4-5" stroke="#444" strokeWidth="1.2" /></Mini>,
  <Mini bg="#3d4a42"><circle cx="10" cy="10.5" r="9.5" fill="#1aa52e" /><ellipse cx="10" cy="8" rx="5" ry="5.5" fill="#6df07a" /></Mini>,
  <Mini bg="#dfe3e3"><path d="M2 7h12v13H2zM2 7l5-6h12v13l-5 6M14 7l5-6" stroke="#111" strokeWidth="1.4" /><path d="M7 1h12l-5 6H2z" fill="#6cc8d0" /></Mini>,
  <Mini bg="#dfe3e3"><path d="M10 1l8 6v7l-8 6-8-6V7z" stroke="#111" strokeWidth="1.3" /><path d="M10 4c3 2 4 5 0 12-4-7-3-10 0-12z" fill="#1f9a90" /></Mini>,
];

// status bar icons
const st = "#d4d8dc";
const GridIcon = () => (
  <Ic>
    <path d="M6 1v18M14 1v18M1 6h18M1 14h18" stroke={st} strokeWidth="1.5" />
  </Ic>
);
const SnapIcon = () => (
  <Ic w={18} h={18}>
    {[3, 9, 15].flatMap(y => [3, 9, 15].map(x => <rect key={`${x}${y}`} x={x - 1.2} y={y - 1.2} width="2.4" height="2.4" fill={st} />))}
  </Ic>
);
const StepIcon = () => (
  <Ic w={22} h={22}>
    <rect x="1" y="13" width="9" height="8" fill="#dfe2e5" />
    <path d="M10 14V3M10 3h10v8H10" stroke={st} strokeWidth="1.3" />
  </Ic>
);
const InferIcon = () => (
  <Ic w={24} h={20}>
    <path d="M5 3v8M1 7h8" stroke="#fff" strokeWidth="1.5" />
    <rect x="8" y="11" width="14" height="6" fill="#fff" />
  </Ic>
);
const OrthoIcon = () => (
  <Ic w={22} h={22}>
    <path d="M2 1v19h19M2 12h8v8" stroke={st} strokeWidth="1.3" />
  </Ic>
);
const PolarIcon = () => (
  <Ic w={22} h={22}>
    <circle cx="10" cy="12" r="8.5" stroke="#e6edf4" strokeWidth="1.3" />
    <path d="M10 12h11M10 12l9-10" stroke="#e6edf4" strokeWidth="1.2" />
  </Ic>
);
const IsoIcon = () => (
  <Ic w={18} h={22}>
    <path d="M2 1l14 20" stroke="#c05a66" strokeWidth="1.3" />
    <path d="M9 0v22" stroke="#6fb06f" strokeWidth="1.3" />
    <circle cx="9" cy="11" r="1.8" fill={st} />
  </Ic>
);
const TrackIcon = () => (
  <Ic w={20} h={20}>
    <path d="M1 18L17 4M1 18h18" stroke="#fff" strokeWidth="1.4" />
    <circle cx="9" cy="13" r="2" fill="#fff" />
  </Ic>
);
const OsnapIcon = () => (
  <Ic w={22} h={22}>
    <path d="M6 4h15v17H6V7" stroke="#fff" strokeWidth="1.4" />
    <rect x="1" y="1" width="6" height="6" stroke="#fff" strokeWidth="1.3" />
  </Ic>
);
const LinesIcon = () => (
  <Ic w={22} h={18}>
    <rect y="1" width="20" height="2" fill={st} />
    <rect y="6" width="14" height="3" fill={st} />
    <rect y="12" width="10" height="5" fill={st} />
    <rect x="12" y="7" width="8" height="1.5" fill={st} />
  </Ic>
);
const CheckerIcon = () => (
  <Ic w={22} h={22}>
    <rect x="1" y="1" width="20" height="20" stroke="#fff" strokeWidth="1.4" />
    {[0, 1, 2, 3].flatMap(y => [0, 1, 2, 3].map(x => ((x + y) % 2 === 0 ? <rect key={`${x}-${y}`} x={3 + x * 4} y={3 + y * 4} width="4" height="4" fill="#fff" /> : null)))}
  </Ic>
);
const CycleIcon = () => (
  <Ic w={22} h={22}>
    <path d="M3 1v6M0 4h6" stroke={st} strokeWidth="1.2" />
    <path d="M4 4h14" stroke={st} strokeWidth="1" />
    <rect x="7" y="8" width="14" height="14" fill="#7ecb91" />
  </Ic>
);
const Box3dIcon = () => (
  <Ic w={24} h={24}>
    <path d="M6 9h12v12H6V11M6 9l6-7h11v13l-5 6M18 9l5-7" stroke={st} strokeWidth="1.2" />
    <rect x="1" y="17" width="6" height="6" stroke={Y} strokeWidth="1.4" />
  </Ic>
);
const UcsIcon = () => (
  <Ic w={24} h={24}>
    <path d="M4 22V4M4 22h18" stroke="#fff" strokeWidth="1.8" />
    <path d="M4 1l3 5H1zM23 22l-5 3v-6z" fill="#fff" />
    <path d="M13 6l-3 6h3l-2 5 6-7h-3l2-4z" fill="#fff" />
  </Ic>
);
const GizmoBoxIcon = () => (
  <Ic w={24} h={24}>
    <path d="M4 20V7l5-5h11v13l-5 5z" stroke={B} strokeWidth="1.2" strokeDasharray="3 2" />
    {sq(4, 20, 4)}
    {sq(20, 3, 4)}
    {sq(15, 20, 4)}
    {sq(4, 7, 4)}
  </Ic>
);
const GizmoIcon = () => (
  <Ic w={24} h={24}>
    <path d="M12 1l10 6v10l-10 6-10-6V7zM12 12V1M12 12l-10 5M12 12l10 5" stroke="#fff" strokeWidth="1.3" />
    <circle cx="12" cy="12" r="4" stroke="#fff" strokeWidth="1.3" />
  </Ic>
);
const Anno = ({ variant }) => (
  <Ic w={24} h={24}>
    <path d="M10 4l2 8 6 9-7-4-7 4 4-9z" fill={variant === "sel" ? "#f4f7fa" : "#d4d8dc"} />
    {variant === "sel" && <circle cx="19" cy="5" r="3.5" stroke="#fff" strokeWidth="1.4" />}
    {variant === "add" && <path d="M18 1l-3 5h3l-2 5 5-6h-3l2-4z" fill="#d4d8dc" />}
  </Ic>
);
const GearIcon = () => (
  <Ic>
    <circle cx="10" cy="10" r="5.2" stroke="#dfe2e5" strokeWidth="3.4" />
    <path d="M10 0v4M10 16v4M0 10h4M16 10h4M3 3l3 3M14 14l3 3M3 17l3-3M14 6l3-3" stroke="#dfe2e5" strokeWidth="3" />
  </Ic>
);
const PlusIcon = () => (
  <Ic w={22} h={22}>
    <path d="M11 0v22M0 11h22" stroke="#dfe2e5" strokeWidth="2" />
  </Ic>
);
const UnitRuler = () => (
  <Ic w={14} h={22}>
    <rect width="12" height="22" fill="#dfe2e5" />
    <path d="M5 3h7M8 7h4M5 11h7M8 15h4M5 19h7" stroke="#38424e" strokeWidth="1.2" />
  </Ic>
);
const QuickProps = () => (
  <Ic w={16} h={22}>
    <rect x="1" y="1" width="14" height="20" stroke={st} strokeWidth="1.2" />
    <rect x="1" y="1" width="14" height="4" fill={st} />
    <path d="M5 9h8M5 13h8M5 17h8M2.5 9h1M2.5 13h1M2.5 17h1" stroke={st} strokeWidth="1.2" />
  </Ic>
);
const LockWin = () => (
  <Ic w={22} h={22}>
    <path d="M1 1h18v13M1 1v15h8" stroke={st} strokeWidth="1.3" />
    <rect x="1" y="1" width="18" height="3" fill={st} />
    <rect x="10" y="14" width="9" height="7" fill="#dfe2e5" />
    <path d="M16 14v-2c0-3 5-3 5 0" stroke={st} />
  </Ic>
);
const ShapesIcon = () => (
  <Ic w={22} h={24}>
    <rect x="1" y="1" width="9" height="9" stroke={st} strokeWidth="1.2" />
    <circle cx="16" cy="10" r="4" stroke={st} strokeWidth="1.2" />
    <path d="M8 15l4 8H4z" stroke={st} strokeWidth="1.2" />
  </Ic>
);
const CleanIcon = () => (
  <Ic w={22} h={22}>
    <rect width="22" height="22" fill="#275c9c" />
    <rect x="4" y="4" width="9" height="9" stroke="#7cb0e0" strokeWidth="1.4" />
    <rect x="9" y="9" width="9" height="9" stroke="#7cb0e0" strokeWidth="1.4" />
  </Ic>
);

const Tool = ({ icon, text, caret, caretMl, iw = 20, ml }) => (
  <Row>
    <ToolSlot $w={iw}>{icon}</ToolSlot>
    {text && <ToolText $ml={ml}>{text}</ToolText>}
    {caret && <Caret $ml={caretMl} />}
  </Row>
);

const FootLabel = ({ children }) => (
  <>
    <span>{children}</span>
    <Caret $s={5} />
  </>
);

export default function App() {
  return (
    <Frame>
      <Global />
      <TopGap />
      <TitleBar>
        <Slot><FolderIcon /></Slot>
        <Slot $ml={10}><SaveIcon /></Slot>
        <Slot $ml={9}><SaveAsIcon /></Slot>
        <Slot $ml={11}><PhoneFolderIcon /></Slot>
        <Slot $ml={14}><PhoneArrowIcon /></Slot>
        <Slot $ml={11}><PrintIcon /></Slot>
        <Slot $ml={10}><UndoIcon /></Slot>
        <Caret $ml={8} $s={2.5} />
        <Slot $ml={9}><UndoIcon flip /></Slot>
        <Caret $ml={13} $s={2.5} />
        <Caret $ml={12} $s={4} />
        <Slot $ml={12}><SendIcon /></Slot>
        <ShareText>共享</ShareText>
        <AppTitle $ml={130} $w={400}>T20天正给排水软件 V8.0 For Autodesk AutoCAD 2022</AppTitle>
        <AppTitle $ml={0} $w={232}>Drawing1.dwg</AppTitle>
        <Slot>
          <svg width="6" height="10" viewBox="0 0 6 10"><path d="M0 0l6 5-6 5z" fill="#c3c8ce" /></svg>
        </Slot>
        <SearchBox>键入关键字或短语</SearchBox>
        <Slot $ml={6}><LensIcon /></Slot>
        <Slot $ml={10}><UserIcon /></Slot>
        <LoginText>登录</LoginText>
        <Caret $ml={17} $s={2.5} />
        <Slot $ml={15}><CartIcon /></Slot>
        <Slot $ml={10}><A360Icon /></Slot>
        <Caret $ml={6} $s={2.5} />
        <Slot $ml={27}><HelpIcon /></Slot>
        <Caret $ml={11} $s={2.5} />
      </TitleBar>
      <MenuBar>
        <ClippedTab>入</ClippedTab>
        <span>注释</span>
        <span>参数化</span>
        <span>视图</span>
        <span>管理</span>
        <span>输出</span>
        <span>附加模块</span>
        <span>协作</span>
        <LatinTab>Express Tools</LatinTab>
        <Slot $ml={13}><LayoutThumb /><Caret $ml={5} $s={2.5} /></Slot>
      </MenuBar>
      <Ribbon>
        <Panel $w={170}>
          <PanelBody>
            <Large $w={8} $end>
              <LargeIcon />
              <LargeLabel>线</LargeLabel>
            </Large>
            <Large $w={40} $ml={5}>
              <LargeIcon><CircleTool /></LargeIcon>
              <LargeLabel>圆</LargeLabel>
              <LargeCaret />
            </Large>
            <Large $w={40} $ml={14}>
              <LargeIcon><ArcTool /></LargeIcon>
              <LargeLabel>圆弧</LargeLabel>
              <LargeCaret />
            </Large>
            <Col $w={40} $ml={14}>
              <Tool icon={<RectTool />} caret caretMl={9} />
              <Tool icon={<EllipseTool />} caret caretMl={9} />
              <Tool icon={<HatchTool />} caret caretMl={9} />
            </Col>
          </PanelBody>
          <PanelFoot $pr={94}><FootLabel>绘图</FootLabel></PanelFoot>
        </Panel>
        <Panel $w={283}>
          <PanelBody>
            <Col $w={73} $ml={8}>
              <Tool icon={<MoveIcon />} text="移动" />
              <Tool icon={<CopyIcon />} text="复制" />
              <Tool icon={<StretchIcon />} text="拉伸" />
            </Col>
            <Col $w={75}>
              <Tool icon={<RotateIcon />} text="旋转" />
              <Tool icon={<MirrorIcon />} text="镜像" />
              <Tool icon={<ScaleIcon />} text="缩放" />
            </Col>
            <Col $w={93}>
              <Tool icon={<TrimIcon />} text="修剪" caret caretMl={14} />
              <Tool icon={<FilletIcon />} text="圆角" caret caretMl={14} />
              <Tool icon={<ArrayIcon />} text="阵列" caret caretMl={10} />
            </Col>
            <Col $w={24}>
              <Tool icon={<EraseIcon />} iw={22} />
              <Tool icon={<SolidIcon />} iw={22} />
              <Tool icon={<OffsetIcon />} iw={22} />
            </Col>
          </PanelBody>
          <PanelFoot><FootLabel>修改</FootLabel></PanelFoot>
        </Panel>
        <Panel $w={195}>
          <PanelBody>
            <Large $w={40} $ml={11}>
              <LargeIcon><BigA>A</BigA></LargeIcon>
              <LargeLabel>文字</LargeLabel>
              <LargeCaret />
            </Large>
            <Large $w={44} $ml={11}>
              <LargeIcon><DimIcon /></LargeIcon>
              <LargeLabel>标注</LargeLabel>
            </Large>
            <Col $w={85} $ml={7}>
              <Tool icon={<LinearIcon />} text="线性" caret caretMl={9} />
              <Tool icon={<LeaderIcon />} text="引线" caret caretMl={9} />
              <Tool icon={<TableIcon />} text="表格" />
            </Col>
          </PanelBody>
          <PanelFoot><FootLabel>注释</FootLabel></PanelFoot>
        </Panel>
        <Panel $w={315}>
          <PanelBody>
            <Large $w={50} $ml={1}>
              <LargeIcon><LayerProps /></LargeIcon>
              <LargeLabel>图层</LargeLabel>
              <LargeLabel>特性</LargeLabel>
            </Large>
            <Col $w={258} $ml={1}>
              <Row>
                <Combo $w={258}>
                  <BulbIcon />
                  <Slot $ml={7}><SunIcon /></Slot>
                  <Slot $ml={6}><LockOpen /></Slot>
                  <Swatch $w={18} $h={18} $ml={6} $dark />
                  <ComboValue $ml={6}>0</ComboValue>
                  <Caret $s={4} />
                </Combo>
              </Row>
              <Row>
                <Slot $ml={4}><LayerOff /></Slot>
                <Slot $ml={10}><LayerIso /></Slot>
                <Slot $ml={10}><LayerFreeze /></Slot>
                <Slot $ml={10}><LayerLock /></Slot>
                <Slot $ml={9}><LayerCurrent /></Slot>
                <ToolText $ml={6}>置为当前</ToolText>
              </Row>
              <Row>
                <Slot $ml={4}><LayerOn /></Slot>
                <Slot $ml={10}><LayerPrev /></Slot>
                <Slot $ml={10}><LayerThaw /></Slot>
                <Slot $ml={10}><LayerUnlock /></Slot>
                <Slot $ml={9}><LayerMatch /></Slot>
                <ToolText $ml={6}>匹配图层</ToolText>
              </Row>
            </Col>
          </PanelBody>
          <PanelFoot><FootLabel>图层</FootLabel></PanelFoot>
        </Panel>
        <Panel $w={168}>
          <PanelBody>
            <Large $w={50} $ml={1}>
              <LargeIcon><InsertIcon /></LargeIcon>
              <LargeLabel>插入</LargeLabel>
              <LargeCaret />
            </Large>
            <Col $w={112} $ml={2}>
              <Tool icon={<BlockNew />} text="创建" iw={26} ml={3} />
              <Tool icon={<BlockEdit />} text="编辑" iw={26} ml={3} />
              <Tool icon={<AttrEdit />} text="编辑属性" iw={26} ml={3} caret caretMl={10} />
            </Col>
          </PanelBody>
          <PanelFoot><FootLabel>块</FootLabel></PanelFoot>
        </Panel>
        <Panel $w={303}>
          <PanelBody>
            <Large $w={50} $ml={2}>
              <LargeIcon><MatchProps /></LargeIcon>
              <LargeLabel>特性</LargeLabel>
              <LargeLabel>匹配</LargeLabel>
            </Large>
            <Col $w={22}>
              <Tool icon={<ColorWheel />} iw={22} />
              <Tool icon={<WeightIcon />} iw={22} />
              <Tool icon={<TypeIcon />} iw={22} />
            </Col>
            <Col $w={222} $ml={3}>
              <Row>
                <Combo $w={222} $pl={15}>
                  <Swatch $w={20} $h={20} />
                  <ComboValue $ml={12}>ByLayer</ComboValue>
                  <Caret $s={4} />
                </Combo>
              </Row>
              <Row>
                <Combo $w={222} $pl={3}>
                  <LineSample />
                  <ComboValue $ml={3}>ByLayer</ComboValue>
                  <Caret $s={4} />
                </Combo>
              </Row>
              <Row>
                <Combo $w={222} $pl={3}>
                  <LineSample />
                  <ComboValue $ml={3}>BYLAYER</ComboValue>
                  <Caret $s={4} />
                </Combo>
              </Row>
            </Col>
          </PanelBody>
          <PanelFoot $pr={12}>
            <FootLabel>特性</FootLabel>
            <CornerMark width="8" height="8" viewBox="0 0 8 8" fill="none">
              <path d="M1 1l6 6M7 2v5H2" stroke="#b9bfc6" />
            </CornerMark>
          </PanelFoot>
        </Panel>
        <Panel $w={86}>
          <PanelBody>
            <Large $w={44} $ml={5}>
              <LargeIcon><GroupIcon /></LargeIcon>
              <LargeLabel>组</LargeLabel>
            </Large>
            <Col $w={30} $ml={3}>
              <Row $center><GroupDel /></Row>
              <Row $center><GroupEdit /></Row>
              <Row $center><Boxed><GroupPick /></Boxed></Row>
            </Col>
          </PanelBody>
          <PanelFoot><FootLabel>组</FootLabel></PanelFoot>
        </Panel>
        <Panel $w={95}>
          <PanelBody>
            <Large $w={44} $ml={9}>
              <LargeIcon><RulerIcon /></LargeIcon>
              <LargeLabel>测量</LargeLabel>
              <LargeCaret />
            </Large>
            <Col $w={26} $ml={11}>
              <Row $center><QuickSelect /></Row>
              <Row $center><CountIcon /></Row>
              <Row $center><CalcIcon /></Row>
            </Col>
          </PanelBody>
          <PanelFoot><FootLabel>实用工具</FootLabel></PanelFoot>
        </Panel>
        <Panel $w={95}>
          <PanelBody>
            <Large $w={44} $ml={9}>
              <LargeIcon><PasteIcon /></LargeIcon>
              <LargeLabel>粘贴</LargeLabel>
              <LargeCaret />
            </Large>
            <Col $w={24} $ml={9}>
              <Row $center><CutIcon /></Row>
              <Row $center><ClipCopy /></Row>
            </Col>
          </PanelBody>
          <PanelFoot>剪贴板</PanelFoot>
        </Panel>
        <Panel $w={40}>
          <PanelBody />
          <PanelFoot $start $pl={7}>视图</PanelFoot>
        </Panel>
      </Ribbon>
      <RibbonEdge />
      <Main>
        <Palette>
          <PaletteHead />
          <PaletteRow $h={72} $line />
          <PaletteRow $h={65} $line />
          <PaletteRow $h={163} />
          <RedMark />
          <PickCursor width="26" height="26" viewBox="0 0 26 26" fill="none">
            <path d="M0 13h26M13 0v26" stroke="#dfe6f2" strokeWidth="1.4" />
            <path d="M0 13h26M13 0v26" stroke="#34406e" strokeWidth=".5" />
            <rect x="11" y="11" width="4" height="4" stroke="#34406e" />
          </PickCursor>
        </Palette>
        <Work>
          <Canvas>
            <ViewLabel>[-][俯视][二维线框]</ViewLabel>
            <Watermark>得意工程</Watermark>
            <CommandLine>
              <CommandHead>
                <Grip $h={22} />
                <Slot><svg width="12" height="12" viewBox="0 0 12 12" fill="none"><path d="M1 1l10 10M11 1L1 11" stroke="#c3c7cc" strokeWidth="2" /></svg></Slot>
                <Slot $ml={7}><svg width="18" height="18" viewBox="0 0 18 18" fill="none"><path d="M1 17l9-9c-1-4 2-7 6-6l-3 3 1 2 2 1 2-3c1 4-3 7-7 6l-8 8z" fill="#c3c7cc" /></svg></Slot>
              </CommandHead>
              <CommandInput>
                <svg width="20" height="16" viewBox="0 0 20 16" fill="none">
                  <rect x=".5" y=".5" width="19" height="15" stroke="#555" />
                  <rect x=".5" y=".5" width="19" height="3" fill="#555" />
                  <path d="M3 7l3 2-3 2M7 12h4" stroke="#444" />
                </svg>
                <Caret $ml={4} $c="#555" />
                <CommandHint>键入命令</CommandHint>
                <svg width="9" height="6" viewBox="0 0 9 6"><path d="M0 6l4.5-6L9 6z" fill="#555" /></svg>
              </CommandInput>
            </CommandLine>
            <Drawing width="1707" height="734" viewBox="0 0 1707 734" fill="none">
              <path d="M849.5 18V710" stroke="#2ad035" strokeWidth="1.8" />
              <path d="M491 384H834" stroke="#cfbf8e" strokeWidth="2" />
              <path d="M864 384H1072" stroke="#c9bb88" strokeWidth="2" />
              {/* ucs icon */}
              <path d="M21 653V709M27 715H84" stroke="#cfcfcf" strokeWidth="1.2" />
              <rect x="15.5" y="709.5" width="11" height="11" stroke="#cfcfcf" strokeWidth="1.2" />
              <path d="M89 697L106 714M106 697L89 714" stroke="#dadada" strokeWidth="1.2" />
              <text x="21" y="647" fontSize="24" fill="#cfcfcf" fontFamily="Liberation Sans">Y</text>
              {/* compass ring */}
              <circle cx="1718" cy="115" r="55.5" stroke="#3a3a3a" strokeWidth="13" />
            </Drawing>
            <CompassWest>西</CompassWest>
            <CubeFace />
            <WcsTag>W</WcsTag>
          </Canvas>
          <ToolBand>
            <ToolStrip>
              <Grip $h={20} />
              <MiniIcons $ml={6}>{miniFirst.map((icon, i) => <span key={i}>{icon}</span>)}</MiniIcons>
              <StripSep />
              <MiniIcons $ml={7}>{miniSecond.map((icon, i) => <span key={i}>{icon}</span>)}</MiniIcons>
            </ToolStrip>
          </ToolBand>
        </Work>
      </Main>
      <Lower>
        <LayoutTabs>
          <LayoutTab><span>布局1</span></LayoutTab>
          <AddTab>+</AddTab>
        </LayoutTabs>
        <StatusBar>
          <StatusPill $w={88} $ml={0} $text>
            <StatusValue>比例 1:100</StatusValue>
            <Caret $s={4} $mr={6} />
          </StatusPill>
          <StatusPill $w={174} $ml={1} $text><StatusValue $right>28610, 15275, 0</StatusValue></StatusPill>
          <StatusPill $w={37} $ml={5} $pl={4} $text>模型</StatusPill>
          <StatusPill $w={81} $ml={4}>
            <StatusBtn $ml={1}><GridIcon /></StatusBtn>
            <StatusBtn $ml={2}><SnapIcon /></StatusBtn>
            <Caret $s={4} $ml={6} />
          </StatusPill>
          <StatusPill $w={273} $ml={3}>
            <StatusBtn $ml={2}><StepIcon /></StatusBtn>
            <StatusBtn $on $ml={2}><InferIcon /></StatusBtn>
            <StatusBtn $ml={2}><OrthoIcon /></StatusBtn>
            <StatusBtn $on $ml={4}><PolarIcon /></StatusBtn>
            <Caret $s={4} $ml={6} />
            <StatusBtn $ml={4}><IsoIcon /></StatusBtn>
            <Caret $s={4} $ml={10} />
            <StatusBtn $on $ml={7}><TrackIcon /></StatusBtn>
            <StatusBtn $on $ml={2}><OsnapIcon /></StatusBtn>
            <Caret $s={4} $ml={6} />
          </StatusPill>
          <StatusPill $w={143} $ml={2}>
            <StatusBtn><LinesIcon /></StatusBtn>
            <StatusBtn $on $ml={4}><CheckerIcon /></StatusBtn>
            <StatusBtn $ml={3}><CycleIcon /></StatusBtn>
            <StatusBtn $ml={4}><Box3dIcon /></StatusBtn>
            <Caret $s={4} $ml={4} />
          </StatusPill>
          <StatusPill $w={318} $ml={2} $pl={3}>
            <StatusBtn $on><UcsIcon /></StatusBtn>
            <StatusBtn $ml={6}><GizmoBoxIcon /></StatusBtn>
            <Caret $s={4} $ml={3} />
            <StatusBtn $on $ml={8}><GizmoIcon /></StatusBtn>
            <Caret $s={4} $ml={6} />
            <StatusBtn $on $ml={11}><Anno variant="sel" /></StatusBtn>
            <StatusBtn $ml={3}><Anno variant="add" /></StatusBtn>
            <StatusBtn $ml={1}><Anno /></StatusBtn>
            <StatusValue $pl={6}>1:1 / 100%</StatusValue>
            <Caret $s={4} $mr={6} />
          </StatusPill>
          <StatusPill $w={49} $ml={4} $pl={4}>
            <GearIcon />
            <Caret $s={4} $ml={11} />
          </StatusPill>
          <StatusPill $w={30} $ml={2} $pl={4}><PlusIcon /></StatusPill>
          <StatusPill $w={120} $ml={4} $pl={7}>
            <UnitRuler />
            <StatusValue $pl={15}>小数</StatusValue>
            <Caret $s={4} $mr={6} />
          </StatusPill>
          <StatusPill $w={30} $ml={2} $pl={7}><QuickProps /></StatusPill>
          <StatusPill $w={51} $ml={3} $pl={5}>
            <LockWin />
            <Caret $s={4} $ml={9} />
          </StatusPill>
          <StatusPill $w={59} $ml={2} $pl={4}>
            <ShapesIcon />
            <Slot $ml={9}><CleanIcon /></Slot>
          </StatusPill>
        </StatusBar>
      </Lower>
      <Foot />
    </Frame>
  );
}
